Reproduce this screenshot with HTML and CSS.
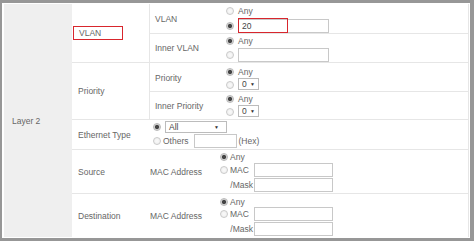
FILE: index.html
```html
<!DOCTYPE html>
<html>
<head>
<meta charset="utf-8">
<link rel="stylesheet" href="styles.css">
</head>
<body>
<div class="frame">
  <div class="tbl">
    <div class="l2">Layer 2</div>
    <div class="rest">

      <div class="grp g-vlan">
        <div class="lbl hlwrap"><span class="hl">VLAN</span></div>
        <div class="subs">
          <div class="sub s1">
            <div class="slbl">VLAN</div>
            <div class="ctl">
              <div class="line"><span class="rd"></span><span class="txt">Any</span></div>
              <div class="line tall m2"><span class="rd on"></span><span class="inp w91 mark">20<span class="redbox"></span></span></div>
            </div>
          </div>
          <div class="sub s2">
            <div class="slbl">Inner VLAN</div>
            <div class="ctl">
              <div class="line"><span class="rd on"></span><span class="txt">Any</span></div>
              <div class="line tall m1"><span class="rd"></span><span class="inp w91"></span></div>
            </div>
          </div>
        </div>
      </div>

      <div class="grp g-pri">
        <div class="lbl">Priority</div>
        <div class="subs">
          <div class="sub p1">
            <div class="slbl">Priority</div>
            <div class="ctl">
              <div class="line"><span class="rd on"></span><span class="txt">Any</span></div>
              <div class="line tall"><span class="rd"></span><span class="sel w21"><span>0</span><span class="arr">&#9660;</span></span></div>
            </div>
          </div>
          <div class="sub p2">
            <div class="slbl">Inner Priority</div>
            <div class="ctl">
              <div class="line"><span class="rd on"></span><span class="txt">Any</span></div>
              <div class="line tall"><span class="rd"></span><span class="sel w21"><span>0</span><span class="arr">&#9660;</span></span></div>
            </div>
          </div>
        </div>
      </div>

      <div class="grp g-eth">
        <div class="lbl">Ethernet Type</div>
        <div class="ectl">
          <div class="line e1"><span class="rd on"></span><span class="sel w62"><span>All</span><span class="arr">&#9660;</span></span></div>
          <div class="line tall"><span class="rd"></span><span class="txt t3">Others</span><span class="inp w43"></span><span class="txt hex">(Hex)</span></div>
        </div>
      </div>

      <div class="grp g-src">
        <div class="lbl">Source</div>
        <div class="mlbl">MAC Address</div>
        <div class="mac">
          <div class="ma"><span class="rd on"></span><span class="txt t2">Any</span></div>
          <div class="ma tall"><span class="rd"></span><span class="txt t2">MAC</span></div>
          <div class="inp w79 tall"></div>
          <div class="mk tall">/Mask</div>
          <div class="inp w79 tall"></div>
        </div>
      </div>

      <div class="grp g-dst">
        <div class="lbl">Destination</div>
        <div class="mlbl">MAC Address</div>
        <div class="mac">
          <div class="ma"><span class="rd on"></span><span class="txt t2">Any</span></div>
          <div class="ma tall"><span class="rd"></span><span class="txt t2">MAC</span></div>
          <div class="inp w79 tall"></div>
          <div class="mk tall">/Mask</div>
          <div class="inp w79 tall"></div>
        </div>
      </div>

    </div>
  </div>
</div>
</body>
</html>
```

FILE: styles.css
```css
* { box-sizing: border-box; }
body {
  margin: 0;
  font-family: "Liberation Sans", Arial, sans-serif;
  font-size: 8.5px;
  color: #666;
  background: #fff;
}
.frame {
  width: 474px;
  height: 241px;
  border-style: solid;
  border-color: #979797;
  border-width: 3px 4px 3px 2px;
  padding: 1px 1px 1px 2px;
  background: #fff;
}
.tbl {
  display: grid;
  grid-template-columns: 68px 1fr;
  height: 100%;
  border-right: 1px solid #e6e6e6;
}
.l2 {
  background: #efefef;
  display: flex;
  align-items: center;
  padding-left: 8px;
}
.rest {
  display: flex;
  flex-direction: column;
}
.grp {
  display: flex;
  border-bottom: 1px solid #e6e6e6;
}
.g-vlan { height: 59px; }
.g-pri { height: 57px; }
.g-eth { height: 30px; }
.g-src { height: 44px; }
.g-dst { height: 43px; border-bottom: none; }

.lbl {
  width: 77px;
  flex: none;
  display: flex;
  align-items: center;
  padding-left: 6px;
}
.lbl.hlwrap { padding-left: 1px; }
.hl {
  width: 50px;
  height: 14px;
  border: 1.5px solid #d8262d;
  display: flex;
  align-items: center;
  padding-left: 5px;
}
.subs {
  flex: 1;
  display: flex;
  flex-direction: column;
  border-left: 1px solid #e6e6e6;
}
.sub { display: flex; }
.s1 { height: 30px; border-bottom: 1px solid #e6e6e6; padding-top: 1px; }
.s2 { height: 29px; padding-top: 1px; }
.p1 { height: 29px; border-bottom: 1px solid #e6e6e6; padding-top: 3px; }
.p2 { height: 28px; padding-top: 1px; }
.slbl {
  width: 76px;
  flex: none;
  display: flex;
  align-items: center;
  padding-left: 5px;
  margin-top: -1px;
}
.ctl {
  display: flex;
  flex-direction: column;
}
.line {
  display: flex;
  align-items: center;
  height: 12px;
}
.line.tall { height: 14px; align-items: flex-start; }
.line.tall .rd { margin-top: 3px; }
.m2 { margin-top: 2px; }
.m1 { margin-top: 1px; }

.rd {
  width: 8px;
  height: 8px;
  flex: none;
  border-radius: 50%;
  border: 1px solid #cacaca;
  background: radial-gradient(circle, #fafafa 0, #ececec 100%);
  margin-right: 4px;
}
.rd.on {
  border-color: #b8b8b8;
  background: radial-gradient(circle, #444 0, #444 1.6px, #d6d6d6 2.6px, #e6e6e6 100%);
}
.inp {
  display: block;
  height: 14px;
  border: 1px solid #c8c8c8;
  background: #fff;
  padding-left: 3px;
  line-height: 12px;
  color: #444;
}
.w91 { width: 91px; }
.w43 { width: 43px; }
.w79 { width: 79px; }
.mark { position: relative; }
.redbox {
  position: absolute;
  left: -1px;
  top: -2px;
  width: 50px;
  height: 15px;
  border: 1.5px solid #d8262d;
}
.sel {
  display: flex;
  align-items: center;
  justify-content: space-between;
  height: 12px;
  border: 1px solid #bcbcbc;
  background: #fff;
  padding: 0 3px 0 3px;
  color: #444;
}
.w21 { width: 21px; }
.w62 { width: 62px; padding-right: 7px; }
.arr { font-size: 5px; color: #333; }

.ectl {
  display: flex;
  flex-direction: column;
  padding-top: 1px;
  padding-left: 4px;
}
.e1 { height: 13px; align-items: flex-start; }
.e1 .rd { margin-top: 2px; margin-right: 4px; }
.t3 { margin-left: -2px; margin-right: 5px; line-height: 14px; }
.hex { margin-left: 2px; line-height: 14px; }

.mlbl {
  width: 65px;
  flex: none;
  display: flex;
  align-items: center;
  padding-left: 1px;
}
.mac {
  display: grid;
  grid-template-columns: 40px 79px;
  grid-template-rows: 12px 14px 14px;
  row-gap: 0;
  align-content: start;
  padding-top: 1px;
}
.g-dst .mac { padding-top: 2px; grid-template-rows: 11px 14px 14px; }
.ma {
  display: flex;
  align-items: center;
  padding-left: 6px;
}
.ma .rd { margin-right: 2px; }
.ma:first-child { grid-column: 1 / 3; }
.mac .inp.tall:last-child { margin-top: 1px; }
.mk {
  text-align: right;
  padding-right: 1px;
  line-height: 14px;
  margin-top: 1px;
}
.txt { white-space: nowrap; }
```
